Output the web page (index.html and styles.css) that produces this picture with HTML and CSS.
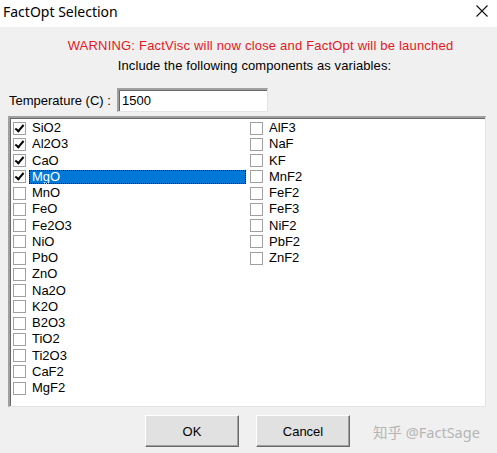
FILE: index.html
```html
<!DOCTYPE html>
<html>
<head>
<meta charset="utf-8">
<link rel="stylesheet" href="styles.css">
</head>
<body>
<div class="window">
  <div class="titlebar">
    <span class="title">FactOpt Selection</span>
    <svg class="close" width="12" height="12" viewBox="0 0 12 12"><path d="M0.5 0.5 L11.5 11.5 M11.5 0.5 L0.5 11.5" stroke="#111" stroke-width="1.1" fill="none"/></svg>
  </div>
  <div class="body">
    <div class="warn">WARNING: FactVisc will now close and FactOpt will be launched</div>
    <div class="info">Include the following components as variables:</div>
    <div class="temp-row">
      <span class="temp-label">Temperature (C) :</span>
      <div class="input">1500</div>
    </div>
    <div class="listbox">
      <div class="grid">
        <div class="item"><span class="cb checked"></span><span class="lbl">SiO2</span></div>
        <div class="item"><span class="cb checked"></span><span class="lbl">Al2O3</span></div>
        <div class="item"><span class="cb checked"></span><span class="lbl">CaO</span></div>
        <div class="item"><span class="cb checked"></span><span class="lbl sel">MgO</span></div>
        <div class="item"><span class="cb"></span><span class="lbl">MnO</span></div>
        <div class="item"><span class="cb"></span><span class="lbl">FeO</span></div>
        <div class="item"><span class="cb"></span><span class="lbl">Fe2O3</span></div>
        <div class="item"><span class="cb"></span><span class="lbl">NiO</span></div>
        <div class="item"><span class="cb"></span><span class="lbl">PbO</span></div>
        <div class="item"><span class="cb"></span><span class="lbl">ZnO</span></div>
        <div class="item"><span class="cb"></span><span class="lbl">Na2O</span></div>
        <div class="item"><span class="cb"></span><span class="lbl">K2O</span></div>
        <div class="item"><span class="cb"></span><span class="lbl">B2O3</span></div>
        <div class="item"><span class="cb"></span><span class="lbl">TiO2</span></div>
        <div class="item"><span class="cb"></span><span class="lbl">Ti2O3</span></div>
        <div class="item"><span class="cb"></span><span class="lbl">CaF2</span></div>
        <div class="item"><span class="cb"></span><span class="lbl">MgF2</span></div>
        <div class="item"><span class="cb"></span><span class="lbl">AlF3</span></div>
        <div class="item"><span class="cb"></span><span class="lbl">NaF</span></div>
        <div class="item"><span class="cb"></span><span class="lbl">KF</span></div>
        <div class="item"><span class="cb"></span><span class="lbl">MnF2</span></div>
        <div class="item"><span class="cb"></span><span class="lbl">FeF2</span></div>
        <div class="item"><span class="cb"></span><span class="lbl">FeF3</span></div>
        <div class="item"><span class="cb"></span><span class="lbl">NiF2</span></div>
        <div class="item"><span class="cb"></span><span class="lbl">PbF2</span></div>
        <div class="item"><span class="cb"></span><span class="lbl">ZnF2</span></div>
      </div>
    </div>
    <div class="buttons">
      <div class="btn">OK</div>
      <div class="btn">Cancel</div>
      <div class="watermark">知乎 @FactSage</div>
    </div>
  </div>
</div>
</body>
</html>
```
FILE: styles.css
```css
html, body {
  margin: 0;
  padding: 0;
}
body {
  width: 497px;
  height: 453px;
  background: #f0f0f0;
  overflow: hidden;
  font-family: "Liberation Sans", Arial, sans-serif;
  font-size: 13px;
  color: #000;
}
.window {
  display: flex;
  flex-direction: column;
  height: 453px;
}
.titlebar {
  height: 27px;
  background: #fff;
  display: flex;
  align-items: center;
  justify-content: space-between;
  padding: 0 9px 5px 3px;
  box-sizing: border-box;
}
.title {
  font-family: "Noto Sans", "Open Sans", sans-serif;
  font-size: 14px;
  color: #000;
}
.close {
  display: block;
}
.body {
  display: flex;
  flex-direction: column;
  flex: 1;
}
.warn {
  color: #e3191e;
  text-align: center;
  margin-top: 11px;
  padding-left: 24px;
  line-height: 16px;
  letter-spacing: 0.2px;
}
.info {
  text-align: center;
  margin-top: 4px;
  padding-left: 12px;
  line-height: 16px;
  letter-spacing: 0.1px;
}
.temp-row {
  display: flex;
  align-items: center;
  margin-top: 14px;
  padding-left: 9px;
}
.temp-label {
  width: 108px;
}
.input {
  width: 145px;
  height: 21px;
  background: #fff;
  border-top: 2px solid #a0a0a0;
  border-left: 2px solid #a0a0a0;
  border-right: 1px solid #e3e3e3;
  border-bottom: 1px solid #e3e3e3;
  box-shadow: inset 1px 1px 0 #696969;
  padding-left: 3px;
  line-height: 21px;
}
.listbox {
  margin: 4px 11px 0 8px;
  height: 291px;
  background: #fff;
  border-top: 2px solid #a0a0a0;
  border-left: 2px solid #a0a0a0;
  border-right: 1px solid #e3e3e3;
  border-bottom: 1px solid #e3e3e3;
  box-shadow: inset 1px 1px 0 #696969;
  box-sizing: border-box;
  padding: 2px 0 0 3px;
}
.grid {
  display: grid;
  grid-auto-flow: column;
  grid-template-rows: repeat(17, 16.25px);
  grid-template-columns: 237px 237px;
}
.item {
  display: flex;
  align-items: center;
}
.cb {
  width: 11px;
  height: 11px;
  border: 1px solid #a0a0a0;
  background: #fff;
  margin-right: 5px;
  position: relative;
  flex: none;
}
.cb.checked::after {
  content: "";
  position: absolute;
  left: 3px;
  top: 0px;
  width: 3px;
  height: 7px;
  border-right: 2px solid #000;
  border-bottom: 2px solid #000;
  transform: rotate(40deg);
}
.lbl {
  line-height: 14px;
  padding-left: 1px;
}
.lbl.sel {
  background: #0078d7;
  color: #fff;
  width: 214px;
  outline: 1px dotted #000;
  outline-offset: -1px;
  margin-left: -2px;
  padding-left: 3px;
}
.buttons {
  display: flex;
  align-items: center;
  margin-top: 8px;
  padding-left: 145px;
  gap: 17px;
}
.btn {
  width: 94px;
  height: 32px;
  box-sizing: border-box;
  background: #e1e1e1;
  border-top: 1px solid #fff;
  border-left: 1px solid #fff;
  border-right: 1px solid #696969;
  border-bottom: 1px solid #696969;
  box-shadow: inset -1px -1px 0 #a0a0a0;
  display: flex;
  align-items: center;
  justify-content: center;
}
.watermark {
  font-family: "Noto Sans", "Noto Sans CJK SC", sans-serif;
  font-size: 14.5px;
  color: #b5b5b5;
  margin-left: 6px;
}
```
